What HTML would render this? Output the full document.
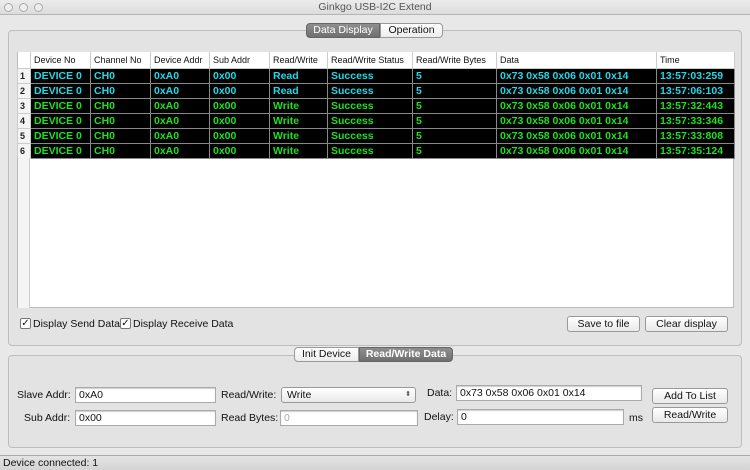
<!DOCTYPE html><html><head><style>
*{box-sizing:border-box;margin:0;padding:0}
body{width:750px;height:470px;background:#e8e8e8;font-family:"Liberation Sans",sans-serif;font-size:10.5px;color:#111;position:relative;overflow:hidden}
.a{position:absolute}
.title{left:0;top:0;width:750px;height:15px;background:linear-gradient(#ececec,#dcdcdc);border-bottom:1px solid #b5b5b5;text-align:center;font-size:10.5px;color:#555;line-height:14px}
.dot{width:9px;height:9px;border:1px solid #aaa;border-radius:50%;top:3px;background:#eee}
.grp{border:1px solid #bdbdbd;border-radius:4px;background:#e3e3e3}
.tab{height:15px;border:1px solid #999;background:linear-gradient(#fff,#ececec);font-size:10.5px;text-align:center;line-height:13px}
.tab.on{background:linear-gradient(#8e8e8e,#6f6f6f);color:#fff;border-color:#666}
table{border-collapse:collapse;position:absolute;left:17px;top:52px;width:717px;table-layout:fixed}
td{height:15px;border:1px solid #888;padding-left:3px;font-weight:bold;font-size:10.5px;white-space:nowrap;overflow:hidden;background:#000;color:inherit}
th{height:16px;font-weight:normal;font-size:9px;text-align:left;padding-left:3px;background:#fff;border-right:1px solid #ccc;border-bottom:1px solid #ccc}
td.n{background:#f4f4f4;color:#222;font-size:9px;padding-left:2px;border-color:#ccc}
tr.c{color:#22d8e8}tr.g{color:#1ee01e}
.btn{height:16px;border:1px solid #999;border-radius:3px;background:linear-gradient(#fff,#e9e9e9);text-align:center;line-height:14px;font-size:10.5px}
.in{height:16px;border:1px solid #aaa;background:#fff;padding-left:3px;line-height:14px;font-size:10.5px;box-shadow:inset 0 1px 1px #ccc}
.lbl{font-size:10.5px;line-height:16px;white-space:nowrap}
.cb{width:11px;height:11px;border:1px solid #777;background:#fff;border-radius:2px;font-size:10px;line-height:9px;text-align:center}
</style></head><body>
<div class="a title">Ginkgo USB-I2C Extend</div>
<div class="a dot" style="left:4px"></div><div class="a dot" style="left:19px"></div><div class="a dot" style="left:34px"></div>
<div class="a grp" style="left:8px;top:30px;width:734px;height:316px"></div>
<div class="a tab on" style="left:306px;top:23px;width:74px;border-radius:4px 0 0 4px">Data Display</div>
<div class="a tab" style="left:380px;top:23px;width:63px;border-radius:0 4px 4px 0">Operation</div>
<div class="a" style="left:17px;top:52px;width:717px;height:256px;background:#fff;border:1px solid #bbb"></div>
<table>
<colgroup><col style="width:13px"><col style="width:60px"><col style="width:60px"><col style="width:59px"><col style="width:60px"><col style="width:58px"><col style="width:85px"><col style="width:84px"><col style="width:160px"><col style="width:78px"></colgroup>
<tr><th></th><th>Device No</th><th>Channel No</th><th>Device Addr</th><th>Sub Addr</th><th>Read/Write</th><th>Read/Write Status</th><th>Read/Write Bytes</th><th>Data</th><th>Time</th></tr>
<tr class="c"><td class="n">1</td><td>DEVICE 0</td><td>CH0</td><td>0xA0</td><td>0x00</td><td>Read</td><td>Success</td><td>5</td><td>0x73 0x58 0x06 0x01 0x14</td><td>13:57:03:259</td></tr>
<tr class="c"><td class="n">2</td><td>DEVICE 0</td><td>CH0</td><td>0xA0</td><td>0x00</td><td>Read</td><td>Success</td><td>5</td><td>0x73 0x58 0x06 0x01 0x14</td><td>13:57:06:103</td></tr>
<tr class="g"><td class="n">3</td><td>DEVICE 0</td><td>CH0</td><td>0xA0</td><td>0x00</td><td>Write</td><td>Success</td><td>5</td><td>0x73 0x58 0x06 0x01 0x14</td><td>13:57:32:443</td></tr>
<tr class="g"><td class="n">4</td><td>DEVICE 0</td><td>CH0</td><td>0xA0</td><td>0x00</td><td>Write</td><td>Success</td><td>5</td><td>0x73 0x58 0x06 0x01 0x14</td><td>13:57:33:346</td></tr>
<tr class="g"><td class="n">5</td><td>DEVICE 0</td><td>CH0</td><td>0xA0</td><td>0x00</td><td>Write</td><td>Success</td><td>5</td><td>0x73 0x58 0x06 0x01 0x14</td><td>13:57:33:808</td></tr>
<tr class="g"><td class="n">6</td><td>DEVICE 0</td><td>CH0</td><td>0xA0</td><td>0x00</td><td>Write</td><td>Success</td><td>5</td><td>0x73 0x58 0x06 0x01 0x14</td><td>13:57:35:124</td></tr>
</table>
<div class="a" style="left:17px;top:158px;width:13px;height:150px;background:#f4f4f4;border-right:1px solid #ccc;border-left:1px solid #bbb"></div>
<div class="a cb" style="left:20px;top:318px">✓</div><div class="a lbl" style="left:33px;top:316px">Display Send Data</div>
<div class="a cb" style="left:120px;top:318px">✓</div><div class="a lbl" style="left:133px;top:316px">Display Receive Data</div>
<div class="a btn" style="left:567px;top:316px;width:73px">Save to file</div>
<div class="a btn" style="left:645px;top:316px;width:83px">Clear display</div>
<div class="a grp" style="left:8px;top:355px;width:734px;height:93px"></div>
<div class="a tab" style="left:294px;top:347px;width:65px;border-radius:4px 0 0 4px">Init Device</div>
<div class="a tab on" style="left:359px;top:347px;width:94px;border-radius:0 4px 4px 0;font-weight:bold">Read/Write Data</div>
<div class="a lbl" style="left:17px;top:387px">Slave Addr:</div>
<div class="a in" style="left:75px;top:387px;width:141px">0xA0</div>
<div class="a lbl" style="left:221px;top:387px">Read/Write:</div>
<div class="a btn" style="left:281px;top:387px;width:135px;text-align:left;padding-left:5px;border-radius:3px">Write<span style="position:absolute;right:4px;font-size:7px;color:#555">⬍</span></div>
<div class="a lbl" style="left:427px;top:385px">Data:</div>
<div class="a in" style="left:456px;top:385px;width:186px">0x73 0x58 0x06 0x01 0x14</div>
<div class="a btn" style="left:652px;top:388px;width:76px">Add To List</div>
<div class="a lbl" style="left:24px;top:410px">Sub Addr:</div>
<div class="a in" style="left:75px;top:410px;width:141px">0x00</div>
<div class="a lbl" style="left:221px;top:410px">Read Bytes:</div>
<div class="a in" style="left:280px;top:410px;width:138px;color:#aaa">0</div>
<div class="a lbl" style="left:424px;top:409px">Delay:</div>
<div class="a in" style="left:457px;top:409px;width:167px">0</div>
<div class="a lbl" style="left:629px;top:410px">ms</div>
<div class="a btn" style="left:652px;top:407px;width:76px">Read/Write</div>
<div class="a" style="left:0;top:455px;width:750px;height:15px;background:linear-gradient(#e4e4e4,#d4d4d4);border-top:1px solid #aaa;padding-left:3px;line-height:14px">Device connected: 1</div>
</body></html>
